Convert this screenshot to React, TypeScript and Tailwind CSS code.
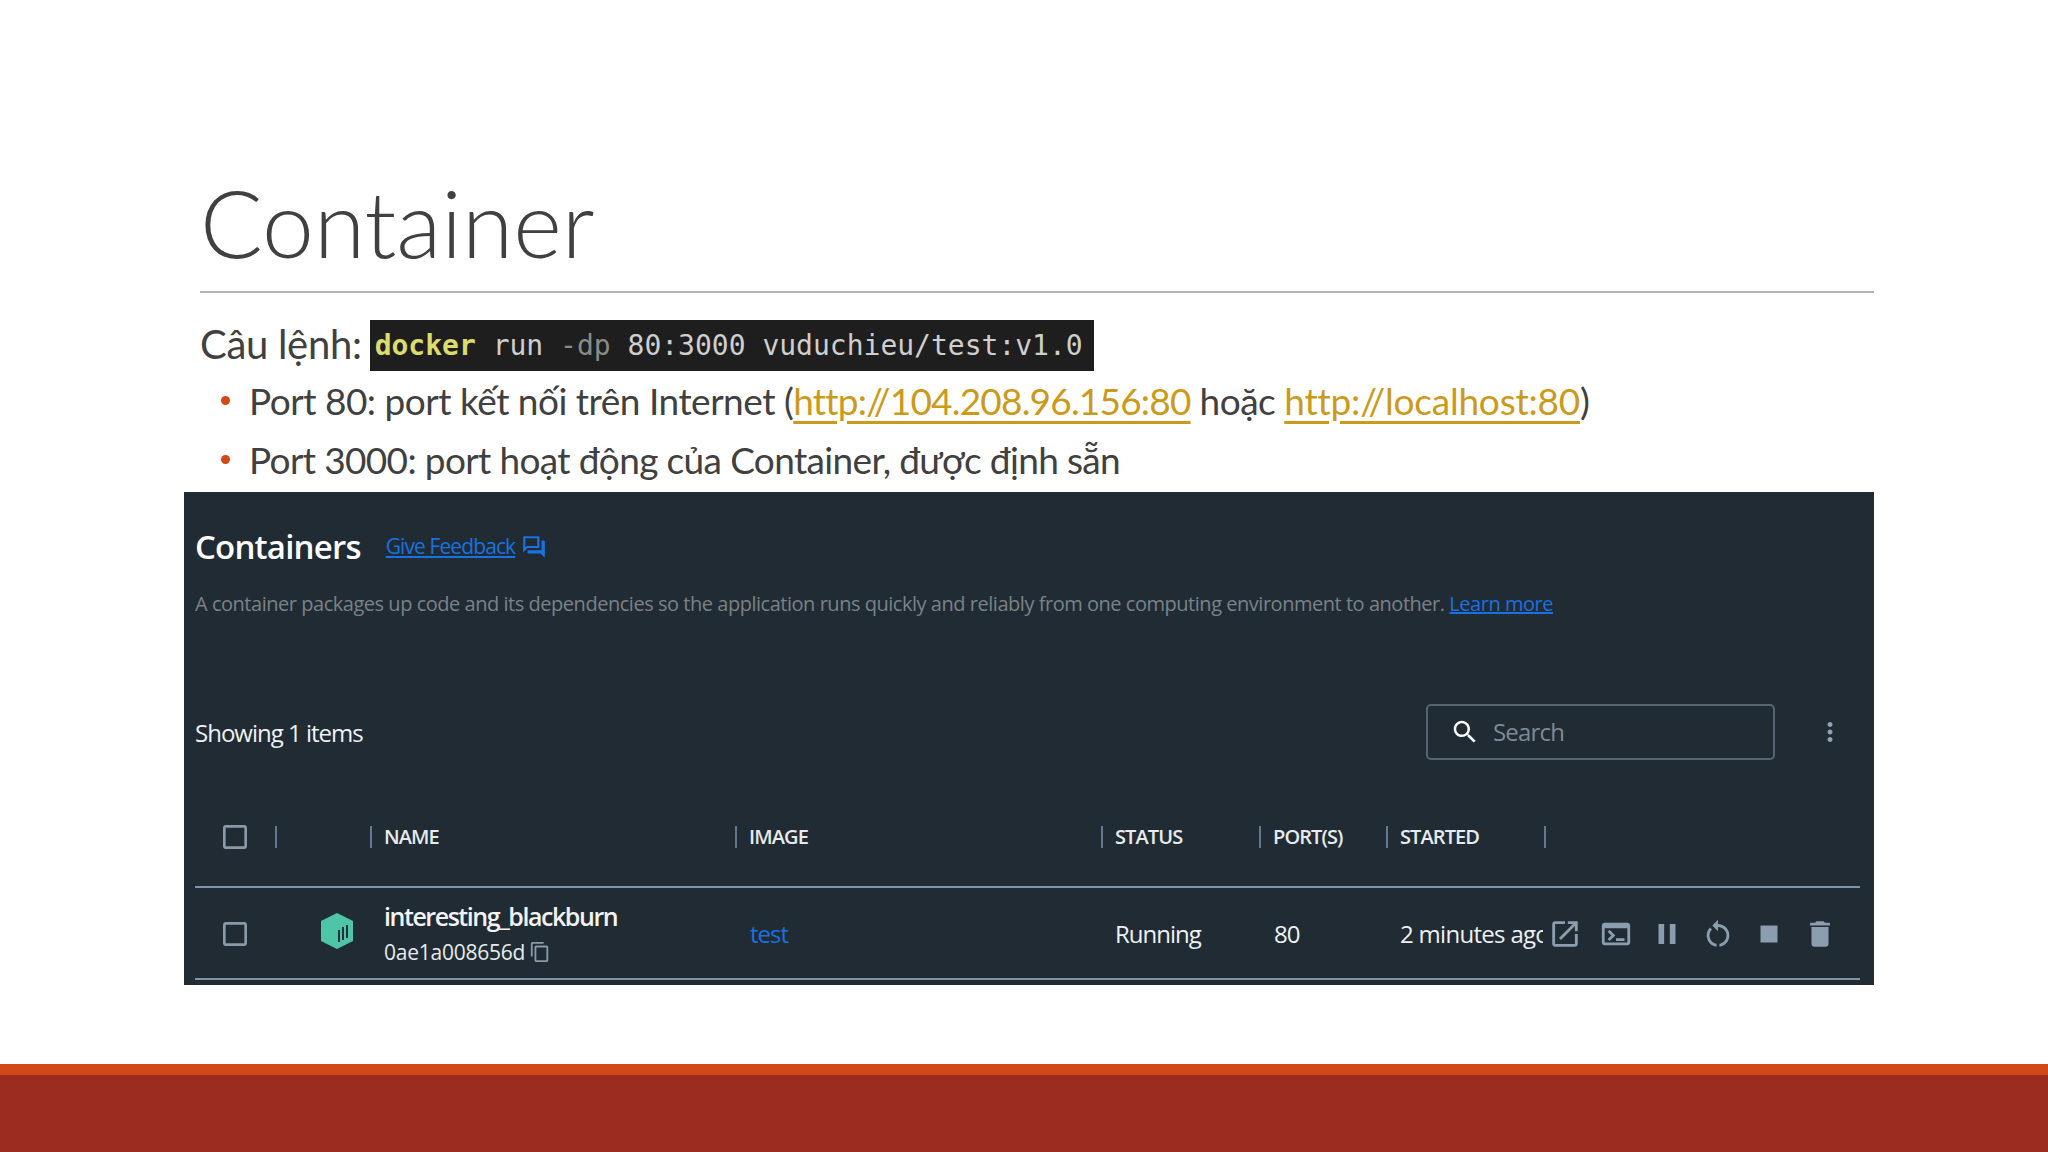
import type { ReactNode } from "react"

const gridCols = "grid grid-cols-[80px_95px_365px_366px_158px_127px_1fr]"

function Mi({ d, className }: { d: string; className: string }) {
  return (
    <svg viewBox="0 0 24 24" fill="currentColor" className={className}>
      <path d={d} />
    </svg>
  )
}

const icons = {
  open: "M19 19H5V5h7V3H5c-1.11 0-2 .9-2 2v14c0 1.1.89 2 2 2h14c1.1 0 2-.9 2-2v-7h-2v7zM14 3v2h3.59l-9.83 9.83 1.41 1.41L19 6.41V10h2V3h-7z",
  terminal:
    "M20 4H4c-1.1 0-2 .9-2 2v12c0 1.1.9 2 2 2h16c1.1 0 2-.9 2-2V6c0-1.1-.9-2-2-2zm0 14H4V8h16v10zm-2-1h-6v-2h6v2zM7.5 17l-1.41-1.41L8.67 13l-2.59-2.59L7.5 9l4 4-4 4z",
  pause: "M6 19h4V5H6v14zm8-14v14h4V5h-4z",
  restart:
    "M12 5V2L8 6l4 4V7c3.31 0 6 2.69 6 6 0 2.97-2.17 5.43-5 5.91v2.02c3.95-.49 7-3.86 7-7.93 0-4.42-3.58-8-8-8zm-6 8c0-1.65.67-3.15 1.76-4.24L6.34 7.34C4.9 8.79 4 10.79 4 13c0 4.08 3.05 7.44 7 7.93v-2.02c-2.83-.48-5-2.94-5-5.91z",
  stop: "M6 6h12v12H6z",
  trash: "M6 19c0 1.1.9 2 2 2h8c1.1 0 2-.9 2-2V7H6v12zM19 4h-3.5l-1-1h-5l-1 1H5v2h14V4z",
  search:
    "M15.5 14h-.79l-.28-.27C15.41 12.59 16 11.11 16 9.5 16 5.91 13.09 3 9.5 3S3 5.91 3 9.5 5.91 16 9.5 16c1.61 0 3.09-.59 4.23-1.57l.27.28v.79l5 4.99L20.49 19l-4.99-5zm-6 0C7.01 14 5 11.99 5 9.5S7.01 5 9.5 5 14 7.01 14 9.5 11.99 14 9.5 14z",
  more: "M12 8c1.1 0 2-.9 2-2s-.9-2-2-2-2 .9-2 2 .9 2 2 2zm0 2c-1.1 0-2 .9-2 2s.9 2 2 2 2-.9 2-2-.9-2-2-2zm0 6c-1.1 0-2 .9-2 2s.9 2 2 2 2-.9 2-2-.9-2-2-2z",
  copy: "M16 1H4c-1.1 0-2 .9-2 2v14h2V3h12V1zm3 4H8c-1.1 0-2 .9-2 2v14c0 1.1.9 2 2 2h11c1.1 0 2-.9 2-2V7c0-1.1-.9-2-2-2zm0 16H8V7h11v14z",
  forum:
    "M15 4v7H5.17l-.59.59-.58.58V4h11m1-2H3c-.55 0-1 .45-1 1v14l4-4h10c.55 0 1-.45 1-1V3c0-.55-.45-1-1-1zm5 4h-2v9H6v2c0 .55.45 1 1 1h11l4 4V7c0-.55-.45-1-1-1z",
  checkbox:
    "M19 5v14H5V5h14m0-2H5c-1.1 0-2 .9-2 2v14c0 1.1.9 2 2 2h14c1.1 0 2-.9 2-2V5c0-1.1-.9-2-2-2z",
}

function HeadCell({ children }: { children?: ReactNode }) {
  return (
    <div className="flex items-center">
      <span className="w-[2px] h-[22px] bg-[#64788f]" />
      <span className="pl-[12px] text-[20px] font-semibold text-[#e7ebef] tracking-[-0.9px]">{children}</span>
    </div>
  )
}

function Bullet({ children }: { children: ReactNode }) {
  return (
    <div className="flex items-center h-[59px] pl-[21px]">
      <span className="w-[9px] h-[9px] rounded-full bg-[#d34817] mr-[19px]" />
      <span>{children}</span>
    </div>
  )
}

function ContainerIcon() {
  return (
    <svg viewBox="0 0 36 36" className="w-[36px] h-[36px]">
      <path d="M18 0 L34 8 V28 L18 36 L2 28 V8 Z" fill="#4fc5a8" />
      <path d="M19 17h2v12h-2zM23 14h2v13h-2zM27 12h2v13h-2z" fill="#22303a" />
    </svg>
  )
}

function Terminal() {
  return (
    <span className="inline-flex items-center h-[51px] w-[724px] bg-[#1e1e1e] pl-[5px] font-['DejaVu_Sans_Mono',monospace] text-[28px] tracking-normal text-[#cfcfcf] whitespace-pre leading-none">
      <span className="text-[#dcdc6e] font-bold">docker</span> run <span className="text-[#8a8a8a]">-dp</span> 80:3000 vuduchieu/test:v1.0
    </span>
  )
}

export default function App() {
  return (
    <div className="w-full h-[1152px] flex flex-col bg-white overflow-hidden font-['Lato','Noto_Sans',sans-serif] text-[#404040]">
      <div className="flex-1 pl-[200px] pr-[174px]">
        <h1 className="pt-[167px] h-[291px] text-[93px] leading-[110px] font-light text-[#404040]">Container</h1>
        <div className="h-[2px] bg-[#b5b5b5]" />
        <div className="pt-[27px] text-[37px] leading-[50px]">
          <div className="flex items-center gap-[8px] h-[51px] whitespace-nowrap">
            <span className="text-[40px] -mt-[3px] tracking-[-0.3px]">Câu lệnh:</span>
            <Terminal />
          </div>
          <div className="whitespace-nowrap">
            <div className="tracking-[-0.5px]">
              <Bullet>
                Port 80: port kết nối trên Internet (
                <span className="text-[#cc9a1b] underline underline-offset-[6px] tracking-[-0.8px]">http://104.208.96.156:80</span> hoặc{" "}
                <span className="text-[#cc9a1b] underline underline-offset-[6px] tracking-[-0.2px]">http://localhost:80</span>)
              </Bullet>
            </div>
            <div className="tracking-[-0.65px]">
              <Bullet>Port 3000: port hoạt động của Container, được định sẵn</Bullet>
            </div>
          </div>
        </div>

        <section className="-ml-[16px] mt-[3px] h-[493px] bg-[#212b33] px-[11px] font-['Open_Sans',sans-serif] text-white">
          <div className="flex items-center pt-[36px] h-[73px]">
            <h2 className="text-[33px] font-semibold tracking-[-0.8px]">Containers</h2>
            <a className="ml-[25px] text-[21px] text-[#1872e0] underline tracking-[-0.9px]">Give Feedback</a>
            <Mi d={icons.forum} className="ml-[6px] w-[26px] h-[26px] text-[#1872e0]" />
          </div>
          <p className="mt-[25px] text-[20px] leading-[28px] text-[#7a8288] tracking-[-0.47px] whitespace-nowrap">
            A container packages up code and its dependencies so the application runs quickly and reliably from one
            computing environment to another. <a className="text-[#1872e0] underline">Learn more</a>
          </p>
          <div className="flex items-center justify-between mt-[86px] h-[56px]">
            <span className="mt-[1px] text-[24px] text-[#eef1f3] tracking-[-1px]">Showing 1 items</span>
            <div className="flex items-center">
              <div className="flex items-center w-[349px] h-[56px] rounded-[5px] border-2 border-[#566472] pl-[22px]">
                <Mi d={icons.search} className="w-[30px] h-[30px] text-white" />
                <span className="ml-[13px] text-[24px] text-[#7f8a94] tracking-[-0.8px]">Search</span>
              </div>
              <div className="w-[88px] flex justify-end pr-[18px]">
                <Mi d={icons.more} className="w-[30px] h-[30px] text-[#8fa3b6]" />
              </div>
            </div>
          </div>

          <div className={`${gridCols} items-center mt-[52px] h-[50px] w-[1665px] border-b-2 border-[#8094a8] pb-[24px] box-content -mb-[24px]`}>
            <div className="flex pl-[24px]">
              <Mi d={icons.checkbox} className="w-[32px] h-[32px] text-[#8a9aa9]" />
            </div>
            <HeadCell />
            <HeadCell>NAME</HeadCell>
            <HeadCell>IMAGE</HeadCell>
            <HeadCell>STATUS</HeadCell>
            <HeadCell>PORT(S)</HeadCell>
            <div className="flex items-center">
              <HeadCell>STARTED</HeadCell>
              <span className="ml-[65px] w-[2px] h-[22px] bg-[#64788f]" />
            </div>
          </div>

          <div className={`${gridCols} items-center mt-[25px] h-[91px] w-[1665px] border-b-2 border-[#8094a8] text-[24px] tracking-[-1px]`}>
            <div className="flex pl-[24px]">
              <Mi d={icons.checkbox} className="w-[32px] h-[32px] text-[#8a9aa9]" />
            </div>
            <div className="flex justify-end pr-[15px] -mt-[5px]">
              <ContainerIcon />
            </div>
            <div className="pl-[14px]">
              <div className="text-[25px] font-semibold leading-[36px] mb-[3px] -mt-[3px] text-[#f1f3f5] tracking-[-1.45px]">interesting_blackburn</div>
              <div className="flex items-center text-[21px] leading-[30px] text-[#e7ebef] tracking-[-0.25px]">
                0ae1a008656d
                <Mi d={icons.copy} className="ml-[4px] w-[22px] h-[22px] text-[#8a9aa9]" />
              </div>
            </div>
            <div className="pl-[15px] text-[#1872e0]">test</div>
            <div className="pl-[14px] text-[#eef1f3]">Running</div>
            <div className="pl-[15px] text-[#eef1f3]">80</div>
            <div className="flex items-center pl-[14px]">
              <span className="w-[143px] overflow-hidden whitespace-nowrap text-[#eef1f3] tracking-[-0.7px]">2 minutes ago</span>
              <div className="flex items-center gap-[17px] ml-[5px] text-[#8b9eb0]">
                <Mi d={icons.open} className="w-[34px] h-[34px]" />
                <Mi d={icons.terminal} className="w-[34px] h-[34px]" />
                <Mi d={icons.pause} className="w-[34px] h-[34px]" />
                <Mi d={icons.restart} className="w-[34px] h-[34px]" />
                <Mi d={icons.stop} className="w-[34px] h-[34px]" />
                <Mi d={icons.trash} className="w-[34px] h-[34px]" />
              </div>
            </div>
          </div>
        </section>
      </div>

      <div className="h-[88px] bg-[#9c2c1f] border-t-[11px] border-[#d34817]" />
    </div>
  )
}
